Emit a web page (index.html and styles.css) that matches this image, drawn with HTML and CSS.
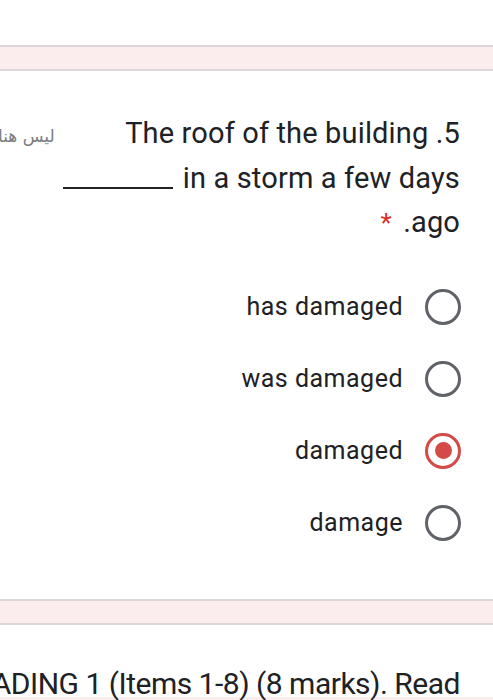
FILE: index.html
```html
<!DOCTYPE html>
<html lang="ar" dir="ltr">
<head>
<meta charset="utf-8">
<link rel="stylesheet" href="styles.css">
</head>
<body>
<div class="page">
  <div class="card card-prev"></div>
  <div class="card card-question">
    <div class="q-head">
      <span class="not-here" dir="rtl">ليس هنا</span>
      <div class="q-title">
        <span class="q-line">The roof of the building .5</span>
        <span class="q-line"><span class="blank"></span> in a storm a few days</span>
        <span class="q-line"><span class="req">*</span> .ago</span>
      </div>
    </div>
    <div class="options">
      <label class="opt"><span class="opt-text">has damaged</span><span class="radio"></span></label>
      <label class="opt"><span class="opt-text">was damaged</span><span class="radio"></span></label>
      <label class="opt"><span class="opt-text">damaged</span><span class="radio checked"><span class="dot"></span></span></label>
      <label class="opt"><span class="opt-text">damage</span><span class="radio"></span></label>
    </div>
  </div>
  <div class="card card-next">
    <div class="section-title"><span>READING 1 (Items 1-8) (8 marks). Read</span></div>
  </div>
</div>
</body>
</html>
```

FILE: styles.css
```css
html, body {
  margin: 0;
  padding: 0;
}
body {
  background: #fbeced;
  overflow: hidden;
  width: 493px;
  height: 700px;
  font-family: Roboto, "Liberation Sans", sans-serif;
  color: #202124;
}
.page {
  display: flex;
  flex-direction: column;
  gap: 22px;
}
.card {
  background: #ffffff;
}
.card-prev {
  height: 45px;
  border-bottom: 2px solid #ddd6d9;
}
.card-question {
  border-top: 2px solid #ddd6d9;
  border-bottom: 2px solid #ddd6d9;
  padding: 40px 32px 0 0;
  height: 532px;
  box-sizing: border-box;
}
.q-head {
  display: flex;
  justify-content: space-between;
  align-items: flex-start;
}
.not-here {
  margin-left: -2px;
  margin-top: 15px;
  font-family: "DejaVu Sans", sans-serif;
  font-size: 17px;
  color: #7a7d82;
  white-space: nowrap;
}
.q-title {
  display: flex;
  flex-direction: column;
  align-items: flex-end;
  font-size: 29px;
  letter-spacing: 0.15px;
  line-height: 44.5px;
  padding-right: 1px;
}
.q-line {
  white-space: nowrap;
}
.blank {
  display: inline-block;
  width: 110px;
  height: 2px;
  background: #202124;
  vertical-align: -1px;
  margin-right: 2px;
}
.req {
  color: #d93025;
  font-size: 26px;
  margin-right: 4px;
}
.options {
  display: flex;
  flex-direction: column;
  gap: 36px;
  margin-top: 43px;
}
.opt {
  display: flex;
  justify-content: flex-end;
  align-items: center;
  gap: 22px;
  font-size: 25px;
  letter-spacing: 0.5px;
  height: 36px;
}
.radio {
  width: 36px;
  height: 36px;
  box-sizing: border-box;
  border: 3.5px solid #5f6368;
  border-radius: 50%;
  display: flex;
  align-items: center;
  justify-content: center;
}
.radio.checked {
  border-color: #d34a47;
}
.dot {
  width: 17px;
  height: 17px;
  border-radius: 50%;
  background: #d34a47;
}
.card-next {
  border-top: 2px solid #ddd6d9;
  height: 74px;
  padding: 41px 33px 0 0;
  box-sizing: border-box;
}
.section-title {
  display: flex;
  justify-content: flex-end;
  font-size: 30px;
  letter-spacing: -0.5px;
  line-height: 36px;
}
.section-title span {
  white-space: nowrap;
  flex-shrink: 0;
}
```
